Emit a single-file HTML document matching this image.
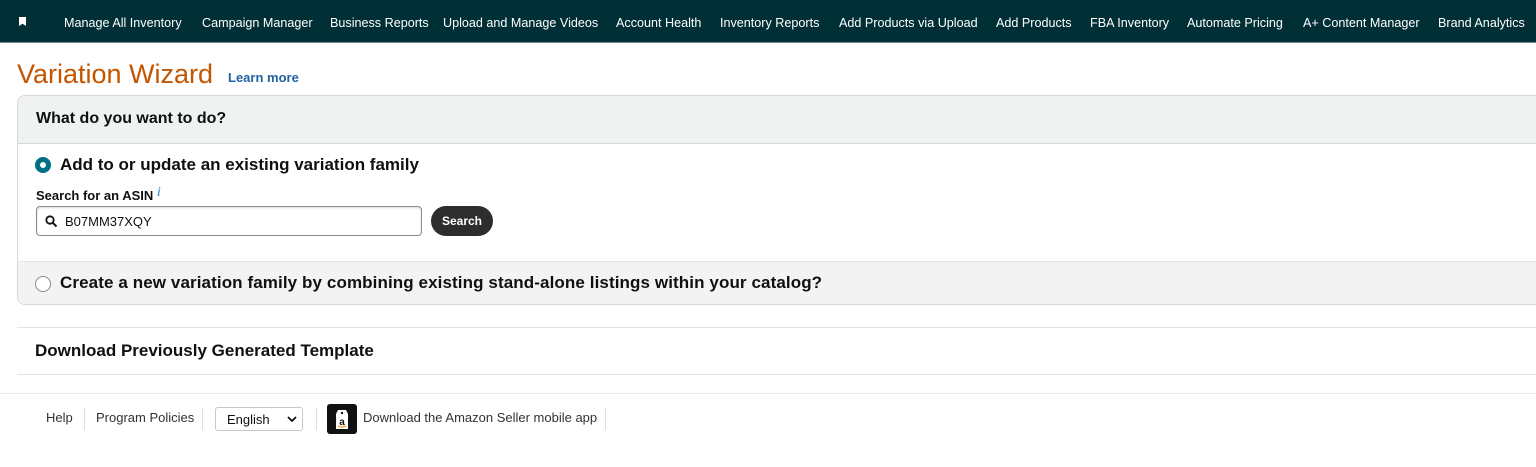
<!DOCTYPE html>
<html><head><meta charset="utf-8"><style>
*{margin:0;padding:0;box-sizing:border-box}
body{width:1536px;height:467px;overflow:hidden;background:#fff;font-family:"Liberation Sans","DejaVu Sans",sans-serif;color:#0f1111;position:relative}
.a{position:absolute;white-space:nowrap}
.nav{position:absolute;left:0;top:0;width:1536px;height:43px;background:#002f36;border-bottom:1px solid #6c8a8e}
.nav span{position:absolute;top:16px;color:#fff;font-size:12.6px}
</style></head><body>
<div class="nav">
<div style="position:absolute;left:19px;top:17px;width:7px;height:9px;background:#fff;clip-path:polygon(0 0,100% 0,100% 100%,50% 75%,0 100%)"></div>
<span style="left:64px">Manage All Inventory</span>
<span style="left:202px">Campaign Manager</span>
<span style="left:330px">Business Reports</span>
<span style="left:443px">Upload and Manage Videos</span>
<span style="left:616px">Account Health</span>
<span style="left:720px">Inventory Reports</span>
<span style="left:839px">Add Products via Upload</span>
<span style="left:996px">Add Products</span>
<span style="left:1090px">FBA Inventory</span>
<span style="left:1187px">Automate Pricing</span>
<span style="left:1303px">A+ Content Manager</span>
<span style="left:1438px">Brand Analytics</span>
</div>
<div class="a" style="left:17px;top:59px;font-size:27px;color:#c45500">Variation Wizard</div>
<div class="a" style="left:228px;top:70px;font-size:13px;font-weight:bold;color:#2162a1">Learn more</div>

<div class="a" style="left:17px;top:95px;width:1540px;height:210px;border:1px solid #d5d9d9;border-radius:8px;overflow:hidden;background:#fff">
 <div style="height:48px;background:#f0f2f2;border-bottom:1px solid #d5d9d9"></div>
 <div style="position:absolute;left:0;top:165px;width:100%;height:45px;background:#f3f3f3;border-top:1px solid #e3e6e6"></div>
</div>
<div class="a" style="left:36px;top:110px;font-size:16px;font-weight:bold">What do you want to do?</div>
<div class="a" style="left:35px;top:157px;width:16px;height:16px;border-radius:50%;border:5px solid #007185;background:#fff"></div>
<div class="a" style="left:60px;top:155px;font-size:17px;font-weight:bold">Add to or update an existing variation family</div>
<div class="a" style="left:36px;top:188px;font-size:13px;font-weight:bold">Search for an ASIN <i style="color:#2a7fb8;font-weight:normal;font-family:'Liberation Serif',serif;font-size:14px;position:relative;top:-4px">i</i></div>
<div class="a" style="left:36px;top:206px;width:386px;height:30px;border:1px solid #888c8c;border-radius:4px;box-shadow:inset 0 1px 2px rgba(15,17,17,.15)">
 <svg style="position:absolute;left:8px;top:8px" width="13" height="13" viewBox="0 0 13 13"><circle cx="5" cy="5" r="3.7" fill="none" stroke="#111" stroke-width="1.8"/><path d="M7.8 7.8L11.5 11.5" stroke="#111" stroke-width="2"/></svg>
 <span style="position:absolute;left:28px;top:7px;font-size:13px">B07MM37XQY</span>
</div>
<div class="a" style="left:431px;top:206px;width:62px;height:30px;border-radius:15px;background:#2d2d2d;color:#fff;font-size:12px;font-weight:bold;text-align:center;line-height:30px">Search</div>
<div class="a" style="left:35px;top:276px;width:16px;height:16px;border-radius:50%;border:1px solid #888c8c;background:#fff"></div>
<div class="a" style="left:60px;top:273px;font-size:17px;font-weight:bold;letter-spacing:0.1px">Create a new variation family by combining existing stand-alone listings within your catalog?</div>

<div class="a" style="left:17px;top:327px;width:1540px;height:1px;background:#e3e3e3"></div>
<div class="a" style="left:35px;top:341px;font-size:17px;font-weight:bold">Download Previously Generated Template</div>
<div class="a" style="left:17px;top:374px;width:1540px;height:1px;background:#e3e3e3"></div>
<div class="a" style="left:0;top:393px;width:1536px;height:1px;background:#eaeaea"></div>

<div class="a" style="left:46px;top:410px;font-size:13px;color:#333">Help</div>
<div class="a" style="left:84px;top:408px;width:1px;height:22px;background:#ddd"></div>
<div class="a" style="left:96px;top:410px;font-size:13px;color:#333">Program Policies</div>
<div class="a" style="left:202px;top:408px;width:1px;height:22px;background:#ddd"></div>
<div class="a" style="left:215px;top:407px;width:88px;height:24px;border:1px solid #c8c8c8;border-radius:3px;font-size:13px;padding:4px 0 0 11px">English
 <svg style="position:absolute;right:5px;top:8px" width="10" height="7" viewBox="0 0 10 7"><path d="M1 1L5 5L9 1" fill="none" stroke="#111" stroke-width="1.8"/></svg></div>
<div class="a" style="left:316px;top:408px;width:1px;height:22px;background:#ddd"></div>
<div class="a" style="left:327px;top:404px;width:30px;height:30px;background:#111;border-radius:3px">
 <svg width="30" height="30" viewBox="0 0 30 30"><path d="M11 6h8l2 4v15H9V10z" fill="#fff"/><circle cx="15" cy="9" r="1.2" fill="#111"/><text x="15" y="21" font-size="10" font-weight="bold" text-anchor="middle" fill="#111" font-family="Liberation Sans">a</text><path d="M11 22q4 2 8 0" stroke="#f90" stroke-width="1.2" fill="none"/></svg>
</div>
<div class="a" style="left:363px;top:410px;font-size:13px;color:#333">Download the Amazon Seller mobile app</div>
<div class="a" style="left:605px;top:408px;width:1px;height:22px;background:#ddd"></div>
</body></html>
